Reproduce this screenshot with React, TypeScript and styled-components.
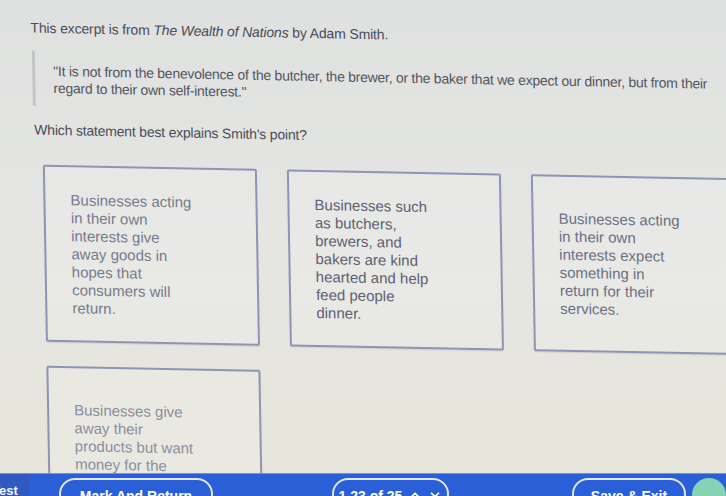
import React, { FC } from 'react'
import styled, { createGlobalStyle } from 'styled-components'
import { ChevronUp, ChevronDown } from 'lucide-react'

const GlobalStyle = createGlobalStyle`
  html, body {
    margin: 0;
    padding: 0;
    overflow: hidden;
  }
  * {
    box-sizing: border-box;
  }
`

const Page = styled.div`
  width: 726px;
  height: 496px;
  display: flex;
  flex-direction: column;
  overflow: hidden;
  background: linear-gradient(180deg, #dfe1e0 0%, #e5e6e3 45%, #e7e5da 100%);
  font-family: 'Liberation Sans', Arial, sans-serif;
`

const Main = styled.main`
  flex: 1;
  min-height: 0;
  overflow: hidden;
`

const Sheet = styled.div`
  padding: 18px 0 0 30px;
  transform: skew(1deg, 1.1deg);
  transform-origin: 0 0;
`

const Intro = styled.p`
  margin: 0;
  font-size: 14px;
  line-height: 18px;
  letter-spacing: -0.15px;
  color: #4a4c57;

  em {
    font-style: italic;
  }
`

const Quote = styled.blockquote`
  margin: 14px 0 0 1px;
  padding: 12px 8px 9px 18px;
  border-left: 3px solid #c4c5c8;
  font-size: 14px;
  line-height: 17px;
  letter-spacing: -0.26px;
  color: #52555f;
`

const Question = styled.p`
  margin: 15px 0 0 2px;
  font-size: 14px;
  line-height: 18px;
  letter-spacing: -0.2px;
  color: #4a4c57;
`

const Options = styled.div`
  display: grid;
  grid-template-columns: repeat(3, 214px);
  column-gap: 30px;
  row-gap: 24px;
  margin: 26px 0 0 10px;
`

const Card = styled.div<{ $tone: string }>`
  height: 177px;
  display: flex;
  flex-direction: column;
  justify-content: center;
  padding-left: 25px;
  border: 2px solid #8e95b2;
  border-radius: 2px;
  background: rgba(255, 255, 255, 0.14);
  box-shadow: 0 1px 1px rgba(60, 60, 90, 0.12);
  color: ${(p) => p.$tone};
`

const Line = styled.span`
  display: block;
  white-space: nowrap;
  font-size: 15px;
  line-height: 18px;
`

const Footer = styled.footer`
  flex-shrink: 0;
  height: 23px;
  display: flex;
  align-items: flex-start;
  overflow: hidden;
  background: #2b5fd7;
  border-top: 1px solid #7092e4;
`

const FooterLabel = styled.div`
  width: 40px;
  height: 100%;
  padding-top: 9px;
  background: #3159c2;
  color: #f2f5ff;
  font-size: 13px;
  font-weight: bold;
  text-indent: -8px;
  overflow: hidden;
  white-space: nowrap;
`

const Pill = styled.button<{ $width: number; $offset: number }>`
  flex-shrink: 0;
  width: ${(p) => p.$width}px;
  height: 32px;
  margin: 4px 0 0 ${(p) => p.$offset}px;
  padding: 8px 0 0;
  display: flex;
  justify-content: center;
  align-items: flex-start;
  gap: 6px;
  border: 2px solid #e3e9fc;
  border-radius: 16px;
  background: transparent;
  color: #ffffff;
  font-family: inherit;
  font-size: 14px;
  font-weight: bold;
  white-space: nowrap;
`

const Dot = styled.div`
  flex-shrink: 0;
  width: 34px;
  height: 34px;
  margin: 4px 0 0 6px;
  border-radius: 50%;
  background: #86d2b5;
`

interface Option {
  lines: string[]
  tone: string
}

const options: Option[] = [
  {
    lines: [
      'Businesses acting',
      'in their own',
      'interests give',
      'away goods in',
      'hopes that',
      'consumers will',
      'return.'
    ],
    tone: '#777b8c'
  },
  {
    lines: [
      'Businesses such',
      'as butchers,',
      'brewers, and',
      'bakers are kind',
      'hearted and help',
      'feed people',
      'dinner.'
    ],
    tone: '#5d6172'
  },
  {
    lines: [
      'Businesses acting',
      'in their own',
      'interests expect',
      'something in',
      'return for their',
      'services.'
    ],
    tone: '#6b7084'
  },
  {
    lines: [
      'Businesses give',
      'away their',
      'products but want',
      'money for the',
      'goods they',
      'give.'
    ],
    tone: '#8a8e9e'
  }
]

const App: FC = () => {
  return (
    <Page>
      <GlobalStyle />
      <Main>
        <Sheet>
          <Intro>
            This excerpt is from <em>The Wealth of Nations</em> by Adam Smith.
          </Intro>
          <Quote>
            &quot;It is not from the benevolence of the butcher, the brewer, or
            the baker that we expect our dinner, but from their regard to their
            own self-interest.&quot;
          </Quote>
          <Question>Which statement best explains Smith&apos;s point?</Question>
          <Options>
            {options.map((option, i) => (
              <Card key={i} $tone={option.tone}>
                {option.lines.map((line) => (
                  <Line key={line}>{line}</Line>
                ))}
              </Card>
            ))}
          </Options>
        </Sheet>
      </Main>
      <Footer>
        <FooterLabel>Test</FooterLabel>
        <Pill $width={154} $offset={30}>Mark And Return</Pill>
        <Pill $width={117} $offset={119}>
          1 23 of 25
          <ChevronUp size={14} strokeWidth={3} />
          <ChevronDown size={14} strokeWidth={3} />
        </Pill>
        <Pill $width={114} $offset={123}>Save &amp; Exit</Pill>
        <Dot />
      </Footer>
    </Page>
  )
}

export default App
